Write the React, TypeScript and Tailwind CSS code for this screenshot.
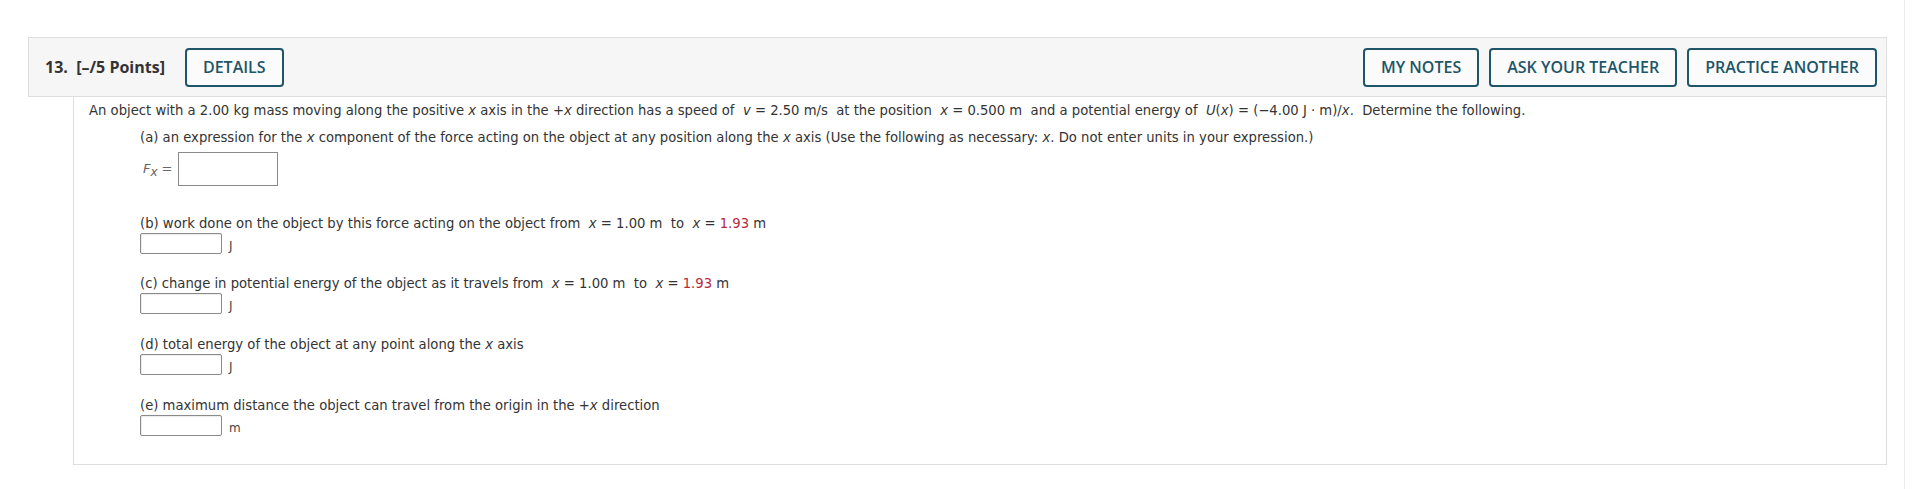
import React from "react";

const head = { fontFamily: '"Open Sans", "Noto Sans", sans-serif' };

function HeadButton({ label }: { label: string }) {
  return (
    <button
      className="h-[39px] px-[16px] border-2 border-[#1f5568] rounded-[4px] bg-[#fbfbfb] text-[#1f5568] text-[16px] font-semibold leading-none"
      style={head}
    >
      {label}
    </button>
  );
}

function Answer({ unit }: { unit: string }) {
  return (
    <div className="flex items-end gap-[7px] mt-[1px]">
      <div className="w-[82px] h-[21px] border border-[#8a8a8a] rounded-[2px] bg-white shadow-[inset_1px_1px_1px_rgba(0,0,0,0.08)]" />
      <span className="text-[12px] leading-[16px] text-[#444]">{unit}</span>
    </div>
  );
}

function X() {
  return <i>x</i>;
}

function Red({ children }: { children: React.ReactNode }) {
  return <span className="text-[#b8283a]">{children}</span>;
}

export default function App() {
  return (
    <div className="w-full h-[489px] bg-white flex text-[#333] font-['DejaVu_Sans','Bitstream_Vera_Sans',Verdana,sans-serif]">
      <div className="ml-[28px] mt-[37px] w-[1859px] shrink-0">
        {/* Header */}
        <div className="h-[60px] border border-[#dedede] bg-[#f6f6f6] flex items-center pl-[16px] pr-[9px]">
          <span className="text-[16px] font-bold text-[#333] mr-[20px]" style={head}>
            13.&nbsp; [–/5 Points]
          </span>
          <HeadButton label="DETAILS" />
          <div className="ml-auto flex gap-[10px]">
            <HeadButton label="MY NOTES" />
            <HeadButton label="ASK YOUR TEACHER" />
            <HeadButton label="PRACTICE ANOTHER" />
          </div>
        </div>

        {/* Question body */}
        <div className="ml-[45px] h-[368px] border-l border-r border-b border-[#dedede] pl-[15px] pt-[6px] text-[13.2px] leading-[16px]">
          <p>
            An object with a 2.00 kg mass moving along the positive <X /> axis in the +<X /> direction has a speed of&nbsp;{" "}
            <i>v</i> = 2.50 m/s&nbsp; at the position&nbsp; <X /> = 0.500 m&nbsp; and a potential energy of&nbsp;{" "}
            <i>U</i>(<X />) = (−4.00 J · m)/<X />.&nbsp; Determine the following.
          </p>

          <div className="ml-[51px]">
            <p className="mt-[11px]">
              (a) an expression for the <X /> component of the force acting on the object at any position along the <X /> axis (Use the following as necessary: <X />. Do not enter units in your expression.)
            </p>
            <div className="flex items-center mt-[6px] ml-[3px]">
              <span className="text-[#666] text-[13px] w-[35px]">
                <i>F</i>
                <sub className="text-[12px]">
                  <i>x</i>
                </sub>
                <span className="ml-[4px]">=</span>
              </span>
              <div className="w-[100px] h-[34px] border border-[#8a8a8a] bg-white" />
            </div>

            <p className="mt-[30px]">
              (b) work done on the object by this force acting on the object from&nbsp; <X /> = 1.00 m&nbsp; to&nbsp; <X /> ={" "}
              <Red>1.93</Red> m
            </p>
            <Answer unit="J" />

            <p className="mt-[22px]">
              (c) change in potential energy of the object as it travels from&nbsp; <X /> = 1.00 m&nbsp; to&nbsp; <X /> ={" "}
              <Red>1.93</Red> m
            </p>
            <Answer unit="J" />

            <p className="mt-[23px]">
              (d) total energy of the object at any point along the <X /> axis
            </p>
            <Answer unit="J" />

            <p className="mt-[23px]">(e) maximum distance the object can travel from the origin in the +<X /> direction</p>
            <Answer unit="m" />
          </div>
        </div>
      </div>
      <div className="ml-[17px] w-[1px] h-full bg-[#ececec]" />
    </div>
  );
}
